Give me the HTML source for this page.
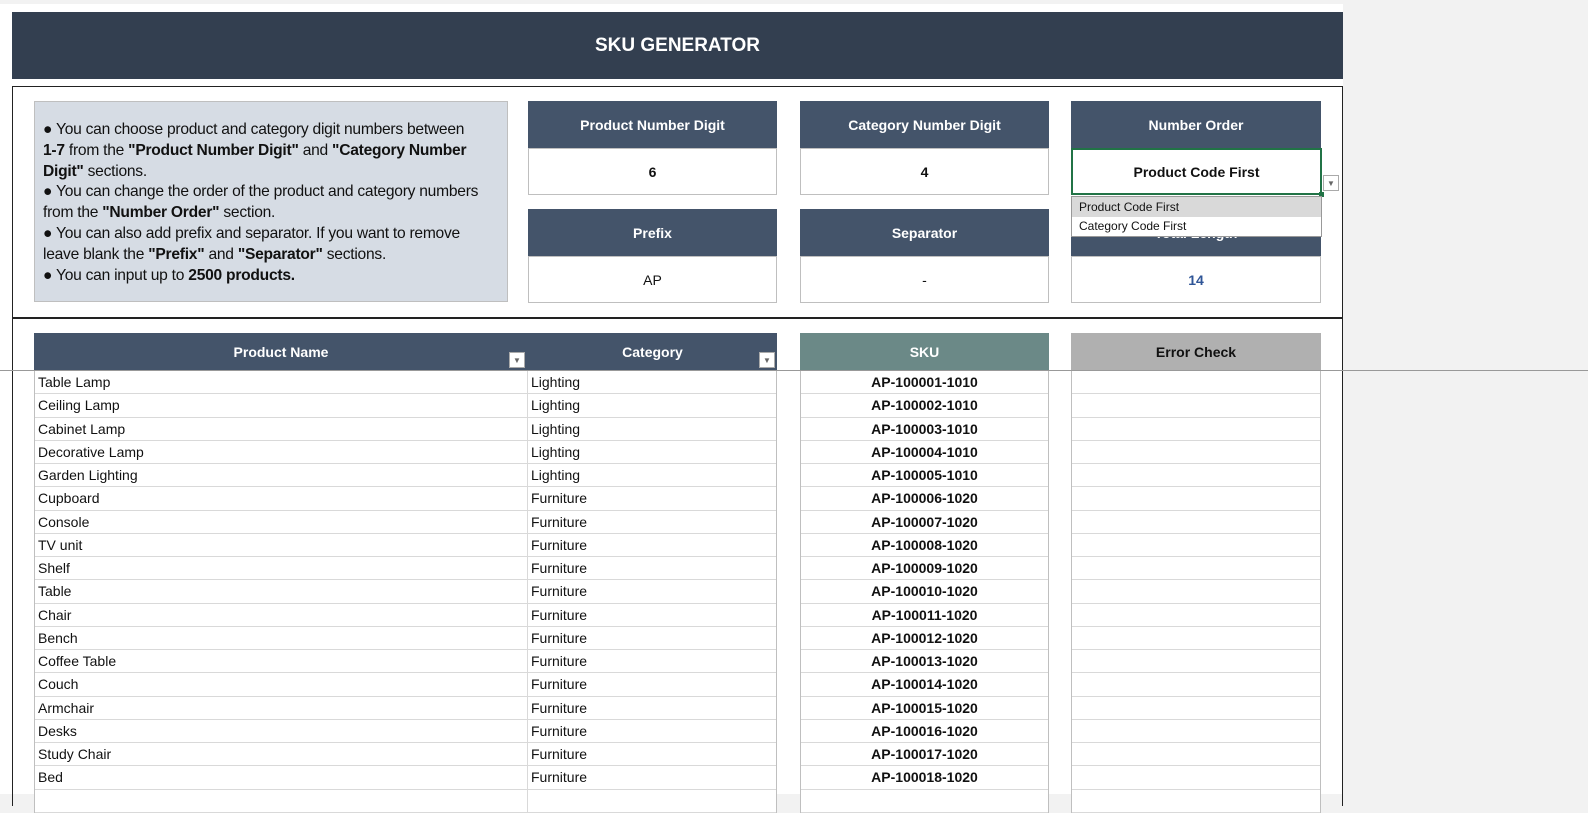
<!DOCTYPE html>
<html><head><meta charset="utf-8"><style>
*{box-sizing:border-box;margin:0;padding:0}
body{width:1588px;height:794px;overflow:hidden;background:#f2f2f2;font-family:"Liberation Sans",sans-serif;position:relative}
.a{position:absolute}
.hd{background:#44546a;color:#fff;font-weight:bold;font-size:14px;display:flex;align-items:center;justify-content:center}
.val{background:#fff;border:1px solid #bfbfbf;font-size:14px;display:flex;align-items:center;justify-content:center;color:#111}
.col{position:absolute;top:371px;background:#fff}
.col div{height:23.25px;border-bottom:1px solid #d9d9d9;font-size:14px;line-height:23px;color:#111;white-space:nowrap}
.l div{padding-left:3px}
.c div{text-align:center;font-weight:bold}
.arr{position:absolute;width:16px;height:16px;background:#fff;border:1px solid #aaa;font-size:8px;color:#666;text-align:center;line-height:15px}
</style></head><body>
<div class="a" style="left:0;top:4px;width:1343px;height:790px;background:#fff"></div>
<div class="a" style="left:12px;top:12px;width:1331px;height:67px;background:#333f50;color:#fff;font-weight:bold;font-size:19px;display:flex;align-items:center;justify-content:center">SKU GENERATOR</div>
<div class="a" style="left:12px;top:86px;width:1331px;height:720px;border:1px solid #222;border-bottom:none"></div>
<div class="a" style="left:12px;top:317px;width:1331px;height:1.5px;background:#222"></div>
<div class="a" style="left:34px;top:101px;width:474px;height:201px;background:#d6dce4;border:1px solid #bfbfbf;padding:18px 4px 0 8px;font-size:15.6px;line-height:20.8px;color:#111;white-space:nowrap;letter-spacing:-0.25px;overflow:hidden">● You can choose product and category digit numbers between<br><b>1-7</b> from the <b>"Product Number Digit"</b> and <b>"Category Number</b><br><b>Digit"</b> sections.<br>● You can change the order of the product and category numbers<br>from the <b>"Number Order"</b> section.<br>● You can also add prefix and separator. If you want to remove<br>leave blank the <b>"Prefix"</b> and <b>"Separator"</b> sections.<br>● You can input up to <b>2500 products.</b></div>

<div class="a hd" style="left:528px;top:101px;width:249px;height:47px">Product Number Digit</div>
<div class="a val" style="left:528px;top:148px;width:249px;height:47px;font-weight:bold">6</div>
<div class="a hd" style="left:800px;top:101px;width:249px;height:47px">Category Number Digit</div>
<div class="a val" style="left:800px;top:148px;width:249px;height:47px;font-weight:bold">4</div>
<div class="a hd" style="left:1071px;top:101px;width:250px;height:47px">Number Order</div>
<div class="a val" style="left:1071px;top:148px;width:251px;height:47px;font-weight:bold;border:2px solid #217346">Product Code First</div>
<div class="a" style="left:1319px;top:192px;width:5px;height:5px;background:#217346"></div>
<div class="arr" style="left:1323px;top:175px">▼</div>

<div class="a hd" style="left:528px;top:209px;width:249px;height:47px">Prefix</div>
<div class="a val" style="left:528px;top:256px;width:249px;height:47px">AP</div>
<div class="a hd" style="left:800px;top:209px;width:249px;height:47px">Separator</div>
<div class="a val" style="left:800px;top:256px;width:249px;height:47px">-</div>
<div class="a hd" style="left:1071px;top:209px;width:250px;height:47px">Total Length</div>
<div class="a val" style="left:1071px;top:256px;width:250px;height:47px;color:#2f5597;font-weight:bold">14</div>
<div class="a" style="left:1071px;top:196px;width:251px;height:41px;background:#fff;border:1px solid #999;font-size:12px;color:#111">
<div style="height:20px;background:#d9d9d9;line-height:20px;padding-left:7px">Product Code First</div>
<div style="height:19px;line-height:19px;padding-left:7px">Category Code First</div></div>

<div class="a hd" style="left:34px;top:333px;width:743px;height:38px"></div>
<div class="a" style="left:34px;top:333px;width:494px;height:38px;color:#fff;font-weight:bold;font-size:14px;display:flex;align-items:center;justify-content:center">Product Name</div>
<div class="a" style="left:528px;top:333px;width:249px;height:38px;color:#fff;font-weight:bold;font-size:14px;display:flex;align-items:center;justify-content:center">Category</div>
<div class="arr" style="left:509px;top:352px">▼</div>
<div class="arr" style="left:759px;top:352px">▼</div>
<div class="a hd" style="left:800px;top:333px;width:249px;height:38px;background:#6b8987">SKU</div>
<div class="a hd" style="left:1071px;top:333px;width:250px;height:38px;background:#b0b0b0;color:#111">Error Check</div>
<div class="a" style="left:0;top:370px;width:1588px;height:1px;background:#999"></div>

<div class="col l" style="left:34px;width:494px;border-left:1px solid #bfbfbf;border-right:1px solid #d9d9d9">
<div>Table Lamp</div><div>Ceiling Lamp</div><div>Cabinet Lamp</div><div>Decorative Lamp</div><div>Garden Lighting</div><div>Cupboard</div><div>Console</div><div>TV unit</div><div>Shelf</div><div>Table</div><div>Chair</div><div>Bench</div><div>Coffee Table</div><div>Couch</div><div>Armchair</div><div>Desks</div><div>Study Chair</div><div>Bed</div><div></div></div>
<div class="col l" style="left:528px;width:249px;border-right:1px solid #bfbfbf">
<div>Lighting</div><div>Lighting</div><div>Lighting</div><div>Lighting</div><div>Lighting</div><div>Furniture</div><div>Furniture</div><div>Furniture</div><div>Furniture</div><div>Furniture</div><div>Furniture</div><div>Furniture</div><div>Furniture</div><div>Furniture</div><div>Furniture</div><div>Furniture</div><div>Furniture</div><div>Furniture</div><div></div></div>
<div class="col c" style="left:800px;width:249px;border-left:1px solid #bfbfbf;border-right:1px solid #bfbfbf">
<div>AP-100001-1010</div><div>AP-100002-1010</div><div>AP-100003-1010</div><div>AP-100004-1010</div><div>AP-100005-1010</div><div>AP-100006-1020</div><div>AP-100007-1020</div><div>AP-100008-1020</div><div>AP-100009-1020</div><div>AP-100010-1020</div><div>AP-100011-1020</div><div>AP-100012-1020</div><div>AP-100013-1020</div><div>AP-100014-1020</div><div>AP-100015-1020</div><div>AP-100016-1020</div><div>AP-100017-1020</div><div>AP-100018-1020</div><div></div></div>
<div class="col c" style="left:1071px;width:250px;border-left:1px solid #bfbfbf;border-right:1px solid #bfbfbf">
<div></div><div></div><div></div><div></div><div></div><div></div><div></div><div></div><div></div><div></div><div></div><div></div><div></div><div></div><div></div><div></div><div></div><div></div><div></div></div>
</body></html>
